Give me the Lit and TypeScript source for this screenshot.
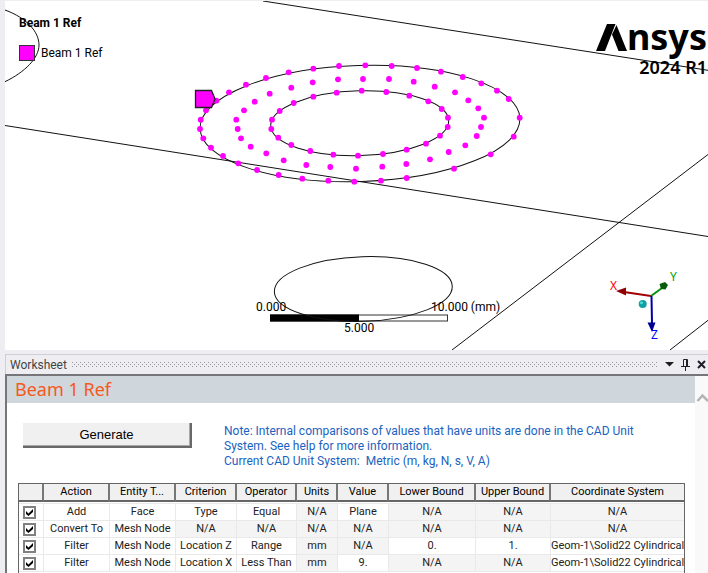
import { LitElement, html, svg, css } from "lit";
import { customElement } from "lit/decorators.js";
import { classMap } from "lit/directives/class-map.js";

type Point = [number, number];

const outerNodes: Point[] = [
  [339, 66], [313.3, 68.7], [288.7, 72.3], [266, 78], [246, 84.7], [229, 92.3], [216.3, 100.7],
  [206, 110.3], [200.7, 119.7], [200, 129], [203.3, 138.3], [211, 147.7], [223, 156], [238.3, 163.3],
  [257, 170], [278.7, 175], [302.3, 178.7], [328.3, 180.7], [354.3, 181.7], [365.3, 65.3], [391.7, 66],
  [417, 68], [441, 71.7], [462.7, 77], [481.3, 83.3], [497, 90.7], [508.7, 99], [519.7, 117.7],
  [513.7, 136.7], [490.7, 154.3], [454, 168.7], [406.7, 178], [381, 180.7],
];
const middleNodes: Point[] = [
  [338, 79.3], [312.7, 82.3], [291.3, 87.7], [269.7, 93.7], [254.7, 101.7], [244, 110.3], [236.3, 119.7],
  [237.7, 129], [241, 138.3], [250.7, 146.7], [266.3, 153.3], [283.7, 160.3], [306.3, 165], [330.3, 167],
  [356, 168.7], [363, 79], [389, 79], [413.7, 81.7], [434.7, 86.7], [455, 92.3], [468.3, 100.3],
  [478.3, 108.3], [484, 117.7], [481, 127], [476.7, 136], [465.3, 145.3], [448.7, 152], [430, 159.3],
  [406.3, 164], [382.3, 166.7],
];
const innerNodes: Point[] = [
  [336.7, 92.7], [313.3, 96.7], [293.7, 103], [279.7, 111], [272, 119.7], [271.3, 129], [278.3, 137.7],
  [291.3, 145], [310.3, 151], [333.3, 154.7], [358, 155.7], [361.7, 90.7], [386.3, 92], [409.3, 95.7],
  [428.3, 101.3], [441.7, 109], [448, 117.7], [447.7, 127], [440, 135.7], [426, 143.7], [406.7, 149.7],
  [383, 154],
];

@customElement("model-view")
class ModelView extends LitElement {
  static styles = css`
    :host { display: block; position: relative; background: #fff; overflow: hidden; color: #000; }
    .scene { display: block; width: 100%; height: auto; }
    .edge { fill: none; stroke: #111; stroke-width: 1; }
    .node { fill: #f0f; }
    .tag { fill: #f0f; stroke: #202020; stroke-width: 1.3; }
    .label { font: 12px Roboto, sans-serif; }
    .axis { font: 12px "Noto Sans", sans-serif; }
    .x { fill: #f00; }
    .y { fill: #00a000; }
    .z { fill: #00f; }
    .legend { position: absolute; left: 14px; top: 14px; font: 12px/16px Roboto, sans-serif; }
    .name { margin: 0; font-weight: 700; }
    .item { display: flex; align-items: center; gap: 6px; margin-top: 14px; }
    .swatch { box-sizing: border-box; width: 16px; height: 16px; background: #f0f; border: 1px solid #333; }
    .logo { position: absolute; right: 1px; top: 18px; display: flex; flex-direction: column; align-items: flex-end; font-family: "Noto Sans", sans-serif; }
    .brand { display: flex; align-items: flex-end; font-size: 36px; line-height: 36px; font-weight: 700; }
    .mark { width: 31px; height: 29px; margin-bottom: 2px; }
    .release { font-size: 18px; line-height: 24px; font-weight: 600; }
  `;

  render() {
    return html`
      <svg class="scene" viewBox="5 1 703 349" aria-label="Model geometry">
        <g class="edge">
          <path d="M5 10C27 18 39 32 39 45C39 58 25 72 5 81.7" />
          <path d="M263 1L708 70.3M5 125.5L708 236.5M452 350L708 154.5M670 350L708 320.3" />
          <ellipse cx="360" cy="123.5" rx="160" ry="58" transform="rotate(-1.85 360 123.5)" />
          <ellipse cx="359.7" cy="123.2" rx="89" ry="32.4" transform="rotate(-1.7 359.7 123.2)" />
        </g>
        <g class="node">
          ${[...outerNodes, ...middleNodes, ...innerNodes].map(
            ([x, y]) => svg`<circle cx=${x} cy=${y} r="2.9" />`
          )}
        </g>
        <path class="tag" d="M195.500 90.500H211.500L215 99L211.500 107.500H195.500Z" />

        <rect x="270.500" y="315" width="177" height="6" fill="#fff" stroke="#333" />
        <rect x="270" y="314.500" width="89" height="7" />
        <ellipse class="edge" cx="363.300" cy="289" rx="89" ry="32.300" transform="rotate(-1.8 363.3 289)" />
        <g class="label">
          <text x="256" y="311">0.000</text>
          <text x="344" y="332">5.000</text>
          <text x="431" y="311">10.000 (mm)</text>
        </g>

        <path d="M651 296L624 292" stroke="#a00000" stroke-width="2" />
        <path d="M616 291L626 287.500V295.500Z" fill="#8f0000" />
        <path d="M651 296L662 288" stroke="#0a9010" stroke-width="2" />
        <path d="M659.500 284L665 282L668 285L665.500 289.500L661 289Z" fill="#075c0c" />
        <path d="M651.500 296L652 324" stroke="#0000a8" stroke-width="2" />
        <path d="M647.500 322.500H655.500L652 332Z" fill="#000090" />
        <circle cx="642.700" cy="304" r="4" fill="#10a0a4" />
        <circle cx="641.500" cy="302.800" r="1.500" fill="#55dada" />
        <g class="axis">
          <text class="x" x="610" y="290">X</text>
          <text class="y" x="670" y="281">Y</text>
          <text class="z" x="651" y="339">Z</text>
        </g>
      </svg>
      <div class="legend">
        <p class="name">Beam 1 Ref</p>
        <div class="item"><span class="swatch"></span>Beam 1 Ref</div>
      </div>
      <div class="logo">
        <div class="brand">
          <svg class="mark" viewBox="0 0 31 29" aria-hidden="true">
            <path d="M0 27L11 0H19.500L9 27Z" />
            <path d="M16 10.500L20.500 1L31 27H22.500Z" />
          </svg>
          <span>nsys</span>
        </div>
        <span class="release">2024 R1</span>
      </div>
    `;
  }
}

const columns = [
  "Action", "Entity T...", "Criterion", "Operator", "Units", "Value", "Lower Bound", "Upper Bound", "Coordinate System",
];
const rows = [
  ["Add", "Face", "Type", "Equal", "N/A", "Plane", "N/A", "N/A", "N/A"],
  ["Convert To", "Mesh Node", "N/A", "N/A", "N/A", "N/A", "N/A", "N/A", "N/A"],
  ["Filter", "Mesh Node", "Location Z", "Range", "mm", "N/A", "0.", "1.", "Geom-1\\Solid22 Cylindrical"],
  ["Filter", "Mesh Node", "Location X", "Less Than", "mm", "9.", "N/A", "N/A", "Geom-1\\Solid22 Cylindrical"],
];

@customElement("work-sheet")
class WorkSheet extends LitElement {
  static styles = css`
    :host { display: flex; flex-direction: column; box-sizing: border-box; border-top: 1px solid #ccced8; border-left: 1px solid #ccced8; font-family: Roboto, sans-serif; }
    .bar { display: flex; align-items: center; height: 19px; gap: 5px; padding: 0 1px 0 4px; color: #444; font-size: 12px; line-height: 18px; }
    .bar span { flex: none; }
    .grip { flex: 1; height: 6px; margin-right: 2px; }
    .tool { flex: none; border: 0; padding: 0; background: none; width: 11px; height: 16px; display: flex; align-items: center; justify-content: center; }
    .body { flex: 1; display: flex; min-height: 0; border-top: 2px solid #76767a; border-left: 2px solid #76767a; margin-left: -1px; background: #fff; }
    .sheet { flex: 1; min-width: 0; display: flex; flex-direction: column; overflow: hidden; }
    .title { margin: 0; padding-left: 8px; background: #cfd7dd; color: #f7581c; font-family: "Noto Sans", sans-serif; font-size: 18px; font-weight: 400; line-height: 27px; }
    .top { display: flex; gap: 32px; padding: 20px 10px 14px 16px; }
    .generate { flex: none; box-sizing: border-box; width: 169px; height: 25px; border: 0 solid #696969; border-width: 0 2px 2px 0; box-shadow: inset -1px -1px #a8a8a8; background: #f0f0f0; color: #000; font: 13px "Liberation Sans", sans-serif; padding: 0; }
    .note { margin: 0; padding-top: 1px; color: #1a62c0; font-size: 12px; line-height: 15px; white-space: pre-wrap; }
    .grid { flex: 1; margin: 0 10px 0 11px; border: 1px solid #666; border-width: 1px 1px 0; overflow: hidden; }
    table { width: 100%; table-layout: fixed; border-collapse: separate; border-spacing: 0; font-size: 11px; line-height: 16px; color: #222; }
    th, td { padding: 0; text-align: center; white-space: nowrap; overflow: hidden; box-sizing: border-box; }
    th { height: 18px; background: #f0f0f0; color: #000; font-weight: 400; border-right: 2px solid #777; border-bottom: 2px solid #666; line-height: 16px; }
    th:last-child { border-right: 0; }
    td { height: 17px; border-right: 1px solid #e9e9e9; border-bottom: 1px solid #e9e9e9; }
    td:last-child { border-right: 0; }
    .off { background: #f4f4f4; }
    .gap td { height: 2px; }
    .pick { width: 25px; } .w1 { width: 66px; } .w2 { width: 66px; } .w3 { width: 61px; } .w4 { width: 60px; }
    .w5 { width: 41px; } .w6 { width: 51px; } .w7 { width: 87px; } .w8 { width: 75px; }
    .check { appearance: none; display: block; box-sizing: border-box; width: 13px; height: 13px; margin: 0 0 0 4px; border: 2px solid #808080; background: #fff; }
    .box { position: relative; }
    .tick { display: none; position: absolute; left: 7px; top: 3px; width: 7px; height: 7px; pointer-events: none; }
    .check:checked + .tick { display: block; }
    .scroll { flex: none; width: 13px; background: #f9f9f9; display: flex; justify-content: flex-end; overflow: hidden; }
    .scroll svg { flex: none; width: 12px; height: 10px; margin-top: 17px; }
  `;

  render() {
    return html`
      <div class="bar">
        <span>Worksheet</span>
        <svg class="grip" aria-hidden="true">
          <defs>
            <pattern id="dots" width="4" height="4" patternUnits="userSpaceOnUse">
              <rect width="1" height="1" fill="#999" /><rect x="2" y="2" width="1" height="1" fill="#999" />
            </pattern>
          </defs>
          <rect width="100%" height="5" fill="url(#dots)" />
        </svg>
        <button class="tool" aria-label="Options"><svg width="9" height="5"><path d="M0 0H9L4.500 4.500Z" fill="#1e1e1e" /></svg></button>
        <button class="tool" aria-label="Pin"><svg width="9" height="12" fill="none" stroke="#22202c"><path d="M2.500 7V.5H6.500V7M0 7.500H9M4.500 8V12M5.500 1V7" /></svg></button>
        <button class="tool" aria-label="Close"><svg width="9" height="9"><path d="M1 1L8 8M8 1L1 8" stroke="#1e1e28" stroke-width="2" /></svg></button>
      </div>
      <div class="body">
        <div class="sheet">
          <h1 class="title">Beam 1 Ref</h1>
          <div class="top">
            <button class="generate">Generate</button>
            <p class="note">Note: Internal comparisons of values that have units are done in the CAD Unit<br />System. See help for more information.<br />Current CAD Unit System:  Metric (m, kg, N, s, V, A)</p>
          </div>
          <div class="grid">
            <table>
              <thead>
                <tr>
                  <th class="pick" aria-label="Enabled"></th>
                  ${columns.map((name, i) => html`<th class="w${i + 1}">${name}</th>`)}
                </tr>
              </thead>
              <tbody>
                <tr class="gap" aria-hidden="true"><td colspan="10"></td></tr>
                ${rows.map(
                  (row, r) => html`<tr>
                    <td>
                      <div class="box">
                        <input class="check" type="checkbox" checked aria-label="Row ${r + 1}" />
                        <svg class="tick" viewBox="0 0 7 7" aria-hidden="true"><path d="M0 2L2.500 4.500L7 0V3L2.500 7L0 5Z" /></svg>
                      </div>
                    </td>
                    ${row.map((cell, c) => html`<td class=${classMap({ off: cell === "N/A" || c === 4 })}>${cell}</td>`)}
                  </tr>`
                )}
              </tbody>
            </table>
          </div>
        </div>
        <div class="scroll">
          <svg viewBox="0 0 12 10" aria-hidden="true"><path d="M1.500 8L6.500 2.500L12 8" fill="none" stroke="#b4b4b4" stroke-width="2.500" /></svg>
        </div>
      </div>
    `;
  }
}

@customElement("app-root")
class AppRoot extends LitElement {
  static styles = css`
    :host { display: flex; flex-direction: column; gap: 4px; box-sizing: border-box; height: 100vh; padding: 1px 0 0 5px; background: #eeeef2; overflow: hidden; }
    model-view { flex: none; }
    work-sheet { flex: 1; min-height: 0; }
  `;

  render() {
    return html`<model-view></model-view><work-sheet></work-sheet>`;
  }
}
